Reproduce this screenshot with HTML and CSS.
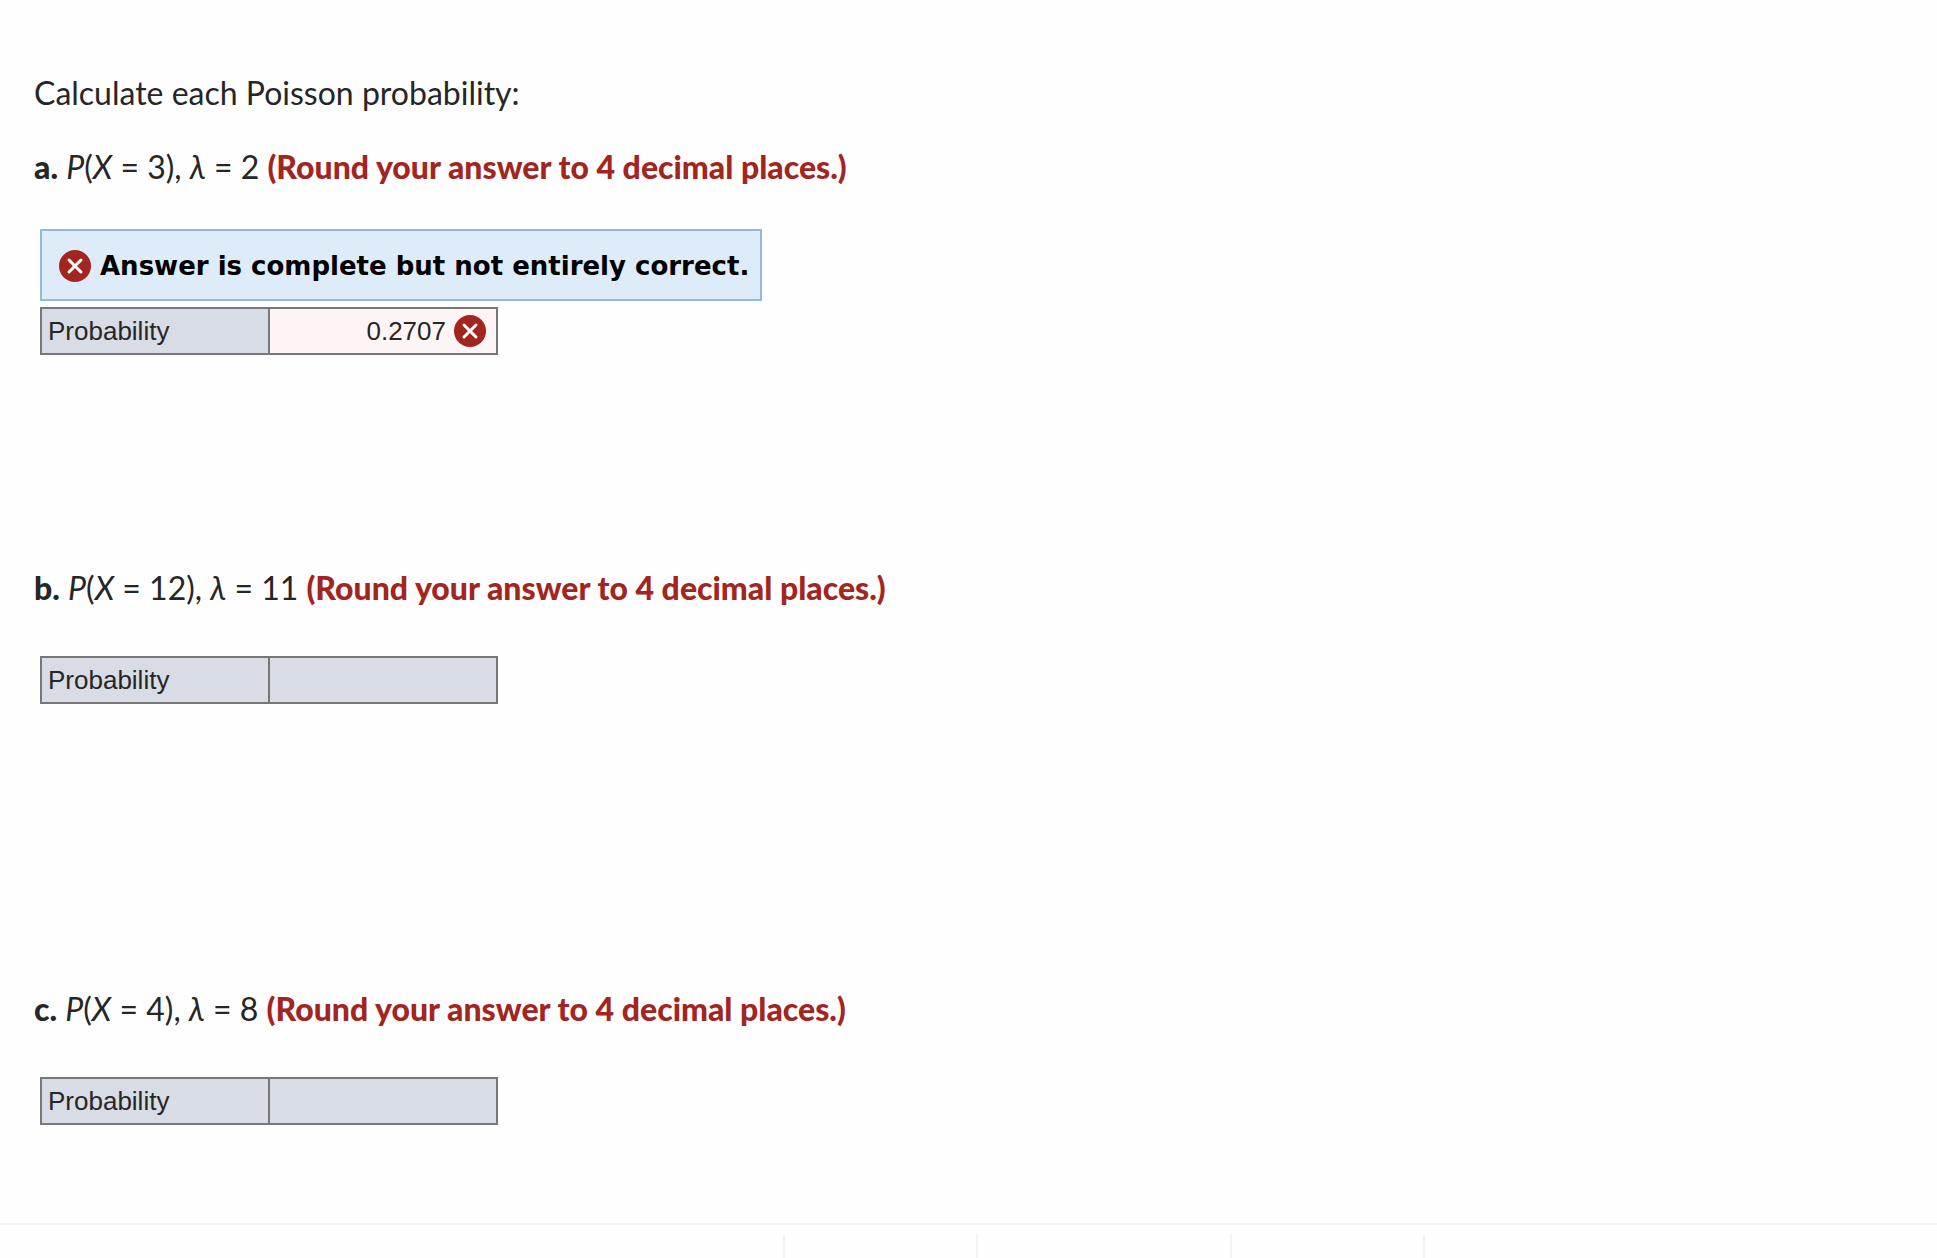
FILE: index.html
```html
<!DOCTYPE html>
<html lang="en">
  <head>
    <meta charset="utf-8" />
    <meta name="viewport" content="width=device-width,initial-scale=1.0" />
    <title>Poisson probability</title>
    <link rel="stylesheet" href="styles.css">
  </head>
  <body>
    <main>
      <p class="prompt">Calculate each Poisson probability:</p>

      <section class="question">
        <p class="prompt"><b>a.</b> <i>P</i>(<i>X</i> = 3), <i>λ</i> = 2 <b class="hint">(Round your answer to 4 decimal places.)</b></p>
        <div class="alert">
          <svg class="icon" viewBox="0 0 32 32" aria-hidden="true">
            <circle cx="16" cy="16" r="16" />
            <path d="M10 10l12 12M22 10L10 22" />
          </svg>
          <span>Answer is complete but not entirely correct.</span>
        </div>
        <table class="answer">
          <tr>
            <th><label for="answer-a">Probability</label></th>
            <td class="wrong">
              <div class="value">
                <input id="answer-a" type="text" value="0.2707" autocomplete="off" />
                <svg class="icon" viewBox="0 0 32 32" aria-hidden="true">
                  <circle cx="16" cy="16" r="16" />
                  <path d="M10 10l12 12M22 10L10 22" />
                </svg>
              </div>
            </td>
          </tr>
        </table>
      </section>

      <section class="question">
        <p class="prompt"><b>b.</b> <i>P</i>(<i>X</i> = 12), <i>λ</i> = 11 <b class="hint">(Round your answer to 4 decimal places.)</b></p>
        <table class="answer">
          <tr>
            <th><label for="answer-b">Probability</label></th>
            <td><div class="value"><input id="answer-b" type="text" autocomplete="off" /></div></td>
          </tr>
        </table>
      </section>

      <section class="question">
        <p class="prompt"><b>c.</b> <i>P</i>(<i>X</i> = 4), <i>λ</i> = 8 <b class="hint">(Round your answer to 4 decimal places.)</b></p>
        <table class="answer">
          <tr>
            <th><label for="answer-c">Probability</label></th>
            <td><div class="value"><input id="answer-c" type="text" autocomplete="off" /></div></td>
          </tr>
        </table>
      </section>
    </main>

    <footer class="pager">
      <div class="pager-step"></div>
      <div class="pager-count"></div>
      <div class="pager-step"></div>
    </footer>
  </body>
</html>
```

FILE: styles.css
```css
* {
  box-sizing: border-box;
}

body {
  margin: 0;
  min-height: 100vh;
  display: flex;
  flex-direction: column;
  background: #fefefe;
  color: #262626;
  font-family: Lato, "Liberation Sans", sans-serif;
}

main {
  padding: 70px 34px 0;
}

.prompt {
  margin: 0 0 28px;
  font-size: 32px;
  line-height: 46px;
}
.prompt b {
  font-weight: 900;
}

.hint {
  color: #a2251f;
}

.question {
  display: flex;
  flex-direction: column;
  align-items: flex-start;
  min-height: 421px;
}
.question:last-child {
  min-height: 0;
  padding-bottom: 60px;
}
.question .prompt {
  margin-bottom: 39px;
}

.alert {
  display: flex;
  align-items: center;
  gap: 9px;
  min-height: 72px;
  margin-left: 6px;
  padding: 2px 11px 0 17px;
  border: 2px solid #98b8db;
  background: #deecf9;
  color: #000;
  font: bold 26px/32px "DejaVu Sans", Verdana, sans-serif;
}

.icon {
  flex: none;
  width: 32px;
  height: 32px;
}
.icon circle {
  fill: #a2251f;
}
.icon path {
  fill: none;
  stroke: #fff;
  stroke-width: 3;
  stroke-linecap: round;
}

.answer {
  width: 458px;
  margin: 6px 0 0 6px;
  border-collapse: collapse;
  table-layout: fixed;
  font: 26px/32px "Liberation Sans", Arial, sans-serif;
}
.answer th,
.answer td {
  height: 46px;
  padding: 0;
  border: 2px solid #777;
  background: #d8dce5;
  font-weight: normal;
  text-align: left;
}
.answer th {
  padding-left: 6px;
}
.answer .wrong {
  background: #fdf5f5;
}

.value {
  display: flex;
  align-items: center;
  gap: 8px;
  padding: 0 10px 0 6px;
}
.value input {
  flex: 1;
  min-width: 0;
  padding: 0;
  border: none;
  outline: none;
  background: none;
  color: inherit;
  font: inherit;
  text-align: right;
}

/* bar stays at the bottom of the window */
.pager {
  display: flex;
  justify-content: center;
  height: 35px;
  margin-top: auto;
  padding: 10px 0 0 270px;
  border-top: 2px solid #f3f3f3;
}
.pager-step {
  width: 195px;
  border: solid #f3f3f3;
  border-width: 0 2px;
}
.pager-count {
  width: 252px;
}
```
